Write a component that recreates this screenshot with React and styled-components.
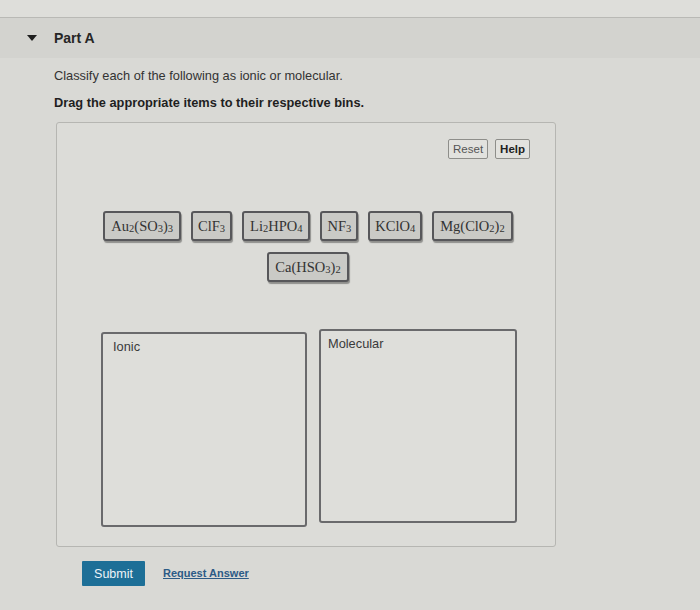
import React from 'react';
import styled, { createGlobalStyle } from 'styled-components';

const GlobalStyle = createGlobalStyle`
  html, body {
    margin: 0;
    padding: 0;
    background: #d8d8d4;
  }
  body {
    font-family: "Liberation Sans", Arial, sans-serif;
  }
`;

const Page = styled.div`
  width: 700px;
  height: 610px;
  overflow: hidden;
  background: #d9d9d5;
  color: #2b2b2b;
`;

const TopStrip = styled.div`
  height: 17px;
  background: #dededa;
  border-bottom: 1px solid #b9b9b5;
`;

const PartHeader = styled.div`
  height: 40px;
  display: flex;
  align-items: center;
  padding-left: 27px;
  gap: 17px;
  background: #d3d3cf;
  font-size: 14px;
  font-weight: 700;
  color: #262626;
`;

const Caret = styled.span`
  width: 0;
  height: 0;
  border-left: 5px solid transparent;
  border-right: 5px solid transparent;
  border-top: 6px solid #1e1e1e;
`;

const Body = styled.div`
  padding: 10px 0 0 54px;
`;

const Prompt = styled.p`
  margin: 0;
  font-size: 12.8px;
  line-height: 16px;
  font-weight: ${p => (p.$bold ? 700 : 400)};
  color: ${p => (p.$bold ? '#1f1f1f' : '#333')};
  margin-bottom: ${p => p.$gap || 0}px;
`;

const Panel = styled.div`
  margin-left: 2px;
  width: 498px;
  height: 423px;
  border: 1px solid #b6b6b2;
  border-radius: 3px;
  background: #dcdcd8;
  display: flex;
  flex-direction: column;
`;

const Toolbar = styled.div`
  display: flex;
  justify-content: flex-end;
  gap: 7px;
  padding: 16px 25px 0 0;
`;

const ToolButton = styled.button`
  font-family: "Liberation Sans", Arial, sans-serif;
  font-size: 11.5px;
  font-weight: ${p => (p.$strong ? 700 : 400)};
  color: ${p => (p.$strong ? '#222' : '#555')};
  background: #e2e2de;
  border: 1px solid #8e8e8a;
  border-radius: 2px;
  height: 20px;
  padding: 0 4px;
  cursor: pointer;
`;

const Chips = styled.div`
  margin-top: 52px;
  display: flex;
  flex-wrap: wrap;
  justify-content: center;
  column-gap: 10px;
  row-gap: 11px;
  padding: 0 36px 0 40px;
`;

const Chip = styled.div`
  height: 26px;
  padding: 0 ${p => p.$pad || 6}px;
  display: flex;
  align-items: center;
  background: #cacac6;
  border: 2px solid #57575a;
  border-radius: 3px;
  box-shadow: 1px 2px 1px rgba(0, 0, 0, 0.35);
  font-family: "Liberation Serif", "Times New Roman", serif;
  font-size: 14.5px;
  color: #333;
  white-space: nowrap;
  sub {
    font-size: 10.5px;
    position: relative;
    top: 3px;
    vertical-align: baseline;
    line-height: 0;
  }
`;

const Bins = styled.div`
  margin-top: 47px;
  display: flex;
  align-items: flex-start;
  gap: 12px;
  padding-left: 44px;
`;

const Bin = styled.div`
  width: ${p => p.$w}px;
  height: ${p => p.$h}px;
  margin-top: ${p => p.$top || 0}px;
  border: 2px solid #6a6a6c;
  border-radius: 3px;
  background: #dededa;
  box-sizing: border-box;
  padding: 5px ${p => p.$pad || 10}px;
  font-size: 12.8px;
  color: #3a3a3a;
`;

const Footer = styled.div`
  display: flex;
  align-items: center;
  gap: 18px;
  padding: 14px 0 0 82px;
`;

const Submit = styled.button`
  font-family: "Liberation Sans", Arial, sans-serif;
  font-size: 12.5px;
  color: #eef4f8;
  background: #1d6f97;
  border: none;
  border-radius: 1px;
  width: 63px;
  height: 25px;
  cursor: pointer;
`;

const Link = styled.a`
  font-size: 11px;
  font-weight: 700;
  color: #2c5b86;
  text-decoration: underline;
  margin-top: -2px;
  cursor: pointer;
`;

const compounds = [
  { key: 'au', pad: 6, node: <>Au<sub>2</sub>(SO<sub>3</sub>)<sub>3</sub></> },
  { key: 'clf', pad: 5, node: <>ClF<sub>3</sub></> },
  { key: 'li', pad: 6, node: <>Li<sub>2</sub>HPO<sub>4</sub></> },
  { key: 'nf', pad: 5, node: <>NF<sub>3</sub></> },
  { key: 'kclo', pad: 5, node: <>KClO<sub>4</sub></> },
  { key: 'mg', pad: 6, node: <>Mg(ClO<sub>2</sub>)<sub>2</sub></> },
  { key: 'ca', pad: 6, node: <>Ca(HSO<sub>3</sub>)<sub>2</sub></> },
];

export default function App() {
  return (
    <>
      <GlobalStyle />
      <Page>
        <TopStrip />
        <PartHeader>
          <Caret />
          Part A
        </PartHeader>
        <Body>
          <Prompt $gap={11}>Classify each of the following as ionic or molecular.</Prompt>
          <Prompt $bold $gap={11}>Drag the appropriate items to their respective bins.</Prompt>
          <Panel>
            <Toolbar>
              <ToolButton>Reset</ToolButton>
              <ToolButton $strong>Help</ToolButton>
            </Toolbar>
            <Chips>
              {compounds.map(c => (
                <Chip key={c.key} $pad={c.pad}>{c.node}</Chip>
              ))}
            </Chips>
            <Bins>
              <Bin $w={206} $h={195} $top={3}>Ionic</Bin>
              <Bin $w={198} $h={194} $pad={7}>Molecular</Bin>
            </Bins>
          </Panel>
        </Body>
        <Footer>
          <Submit>Submit</Submit>
          <Link>Request Answer</Link>
        </Footer>
      </Page>
    </>
  );
}
